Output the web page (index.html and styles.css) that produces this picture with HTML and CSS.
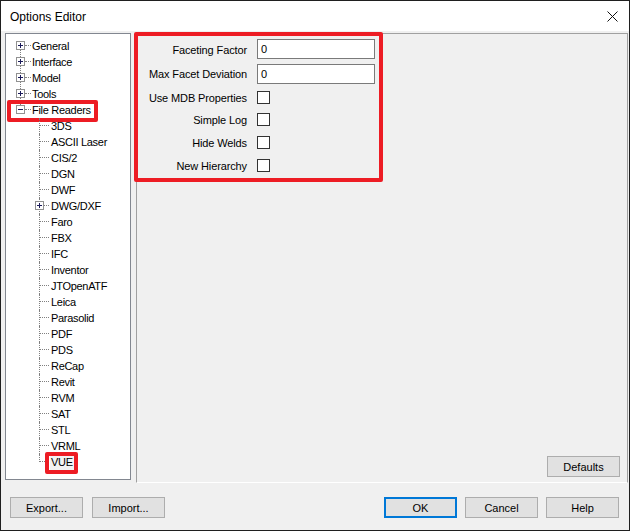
FILE: index.html
```html
<!DOCTYPE html>
<html>
<head>
<meta charset="utf-8">
<title>Options Editor</title>
<link rel="stylesheet" href="styles.css">
</head>
<body>
<div class="window">
  <div class="titlebar">
    <span class="title">Options Editor</span>
    <svg class="close" width="11" height="11" viewBox="0 0 11 11"><path d="M0.5 0.5 L10.5 10.5 M10.5 0.5 L0.5 10.5" stroke="#111" stroke-width="1" fill="none"/></svg>
  </div>
  <div class="main">
    <div class="tree">
      <div class="node top"><svg class="exp" width="9" height="9" viewBox="0 0 9 9"><rect x="0.5" y="0.5" width="8" height="8" fill="#fff" stroke="#919191"/><path d="M2 4.5H7M4.5 2V7" stroke="#1a1a5a"/></svg><span class="hl top-hl"></span><span class="label">General</span></div>
      <div class="node top"><svg class="exp" width="9" height="9" viewBox="0 0 9 9"><rect x="0.5" y="0.5" width="8" height="8" fill="#fff" stroke="#919191"/><path d="M2 4.5H7M4.5 2V7" stroke="#1a1a5a"/></svg><span class="hl top-hl"></span><span class="label">Interface</span></div>
      <div class="node top"><svg class="exp" width="9" height="9" viewBox="0 0 9 9"><rect x="0.5" y="0.5" width="8" height="8" fill="#fff" stroke="#919191"/><path d="M2 4.5H7M4.5 2V7" stroke="#1a1a5a"/></svg><span class="hl top-hl"></span><span class="label">Model</span></div>
      <div class="node top"><svg class="exp" width="9" height="9" viewBox="0 0 9 9"><rect x="0.5" y="0.5" width="8" height="8" fill="#fff" stroke="#919191"/><path d="M2 4.5H7M4.5 2V7" stroke="#1a1a5a"/></svg><span class="hl top-hl"></span><span class="label">Tools</span></div>
      <div class="node top last"><svg class="exp" width="9" height="9" viewBox="0 0 9 9"><rect x="0.5" y="0.5" width="8" height="8" fill="#fff" stroke="#919191"/><path d="M2 4.5H7" stroke="#1a1a5a"/></svg><span class="hl top-hl"></span><span class="label">File Readers</span><span class="annot annot-readers"></span></div>
      <div class="node child"><span class="hl leaf-hl"></span><span class="label">3DS</span></div>
      <div class="node child"><span class="hl leaf-hl"></span><span class="label">ASCII Laser</span></div>
      <div class="node child"><span class="hl leaf-hl"></span><span class="label">CIS/2</span></div>
      <div class="node child"><span class="hl leaf-hl"></span><span class="label">DGN</span></div>
      <div class="node child"><span class="hl leaf-hl"></span><span class="label">DWF</span></div>
      <div class="node child"><svg class="exp child-exp" width="9" height="9" viewBox="0 0 9 9"><rect x="0.5" y="0.5" width="8" height="8" fill="#fff" stroke="#919191"/><path d="M2 4.5H7M4.5 2V7" stroke="#1a1a5a"/></svg><span class="hl exp-hl"></span><span class="label">DWG/DXF</span></div>
      <div class="node child"><span class="hl leaf-hl"></span><span class="label">Faro</span></div>
      <div class="node child"><span class="hl leaf-hl"></span><span class="label">FBX</span></div>
      <div class="node child"><span class="hl leaf-hl"></span><span class="label">IFC</span></div>
      <div class="node child"><span class="hl leaf-hl"></span><span class="label">Inventor</span></div>
      <div class="node child"><span class="hl leaf-hl"></span><span class="label">JTOpenATF</span></div>
      <div class="node child"><span class="hl leaf-hl"></span><span class="label">Leica</span></div>
      <div class="node child"><span class="hl leaf-hl"></span><span class="label">Parasolid</span></div>
      <div class="node child"><span class="hl leaf-hl"></span><span class="label">PDF</span></div>
      <div class="node child"><span class="hl leaf-hl"></span><span class="label">PDS</span></div>
      <div class="node child"><span class="hl leaf-hl"></span><span class="label">ReCap</span></div>
      <div class="node child"><span class="hl leaf-hl"></span><span class="label">Revit</span></div>
      <div class="node child"><span class="hl leaf-hl"></span><span class="label">RVM</span></div>
      <div class="node child"><span class="hl leaf-hl"></span><span class="label">SAT</span></div>
      <div class="node child"><span class="hl leaf-hl"></span><span class="label">STL</span></div>
      <div class="node child"><span class="hl leaf-hl"></span><span class="label">VRML</span></div>
      <div class="node child last"><span class="hl leaf-hl"></span><span class="label selected">VUE</span><span class="annot annot-vue"></span></div>
    </div>
    <div class="panel">
      <div class="form">
        <label class="flabel">Faceting Factor</label>
        <div class="field"><span class="input">0</span></div>
        <label class="flabel">Max Facet Deviation</label>
        <div class="field"><span class="input">0</span></div>
        <label class="flabel">Use MDB Properties</label>
        <div class="field"><span class="check"></span></div>
        <label class="flabel">Simple Log</label>
        <div class="field"><span class="check"></span></div>
        <label class="flabel">Hide Welds</label>
        <div class="field"><span class="check"></span></div>
        <label class="flabel">New Hierarchy</label>
        <div class="field"><span class="check"></span></div>
      </div>
      <span class="annot annot-form"></span>
      <button class="btn defaults">Defaults</button>
    </div>
  </div>
  <div class="footer">
    <div class="group left">
      <button class="btn">Export...</button>
      <button class="btn">Import...</button>
    </div>
    <div class="group right">
      <button class="btn primary">OK</button>
      <button class="btn">Cancel</button>
      <button class="btn">Help</button>
    </div>
  </div>
</div>
</body>
</html>
```

FILE: styles.css
```css
* { box-sizing: border-box; }
html, body { margin: 0; padding: 0; }
body {
  width: 630px;
  height: 531px;
  overflow: hidden;
  font-family: "Liberation Sans", Arial, sans-serif;
  font-size: 11px;
  color: #000;
  background: #f0f0f0;
}
.window {
  width: 630px;
  height: 531px;
  border: 1px solid #1f1f1f;
  background: #f0f0f0;
  display: flex;
  flex-direction: column;
}
.titlebar {
  height: 30px;
  flex: none;
  background: #fff;
  display: flex;
  align-items: center;
  justify-content: space-between;
  padding: 1px 11px 0 9px;
}
.title { font-size: 12px; }
.close { display: block; }

.main {
  display: flex;
  align-items: flex-start;
  gap: 5px;
  padding: 2px 1px 0 4px;
  flex: none;
}

/* tree */
.tree {
  width: 126px;
  height: 447px;
  background: #fff;
  border: 1px solid #828790;
  padding-top: 4px;
  flex: none;
}
.node {
  position: relative;
  display: flex;
  align-items: flex-start;
  height: 16px;
  line-height: 16px;
  white-space: nowrap;
}
.node.top { padding-left: 10px; }
.exp { display: block; flex: none; margin-top: 3px; position: relative; z-index: 1; }
.hl { display: block; height: 0; border-top: 1px dotted #808080; margin-top: 7px; flex: none; }
.top-hl { width: 6px; }
.leaf-hl { width: 9px; margin-left: 34px; }
.child-exp { margin-left: 29px; }
.exp-hl { width: 5px; }
.label { margin-left: 1px; letter-spacing: -0.3px; }
.child .label { margin-left: 2px; }
.label.selected { background: #f3f3f3; padding: 0 1px; margin-left: 1px; }

.node.top:not(.last)::after {
  content: "";
  position: absolute;
  left: 14px;
  top: 12px;
  height: 7px;
  border-left: 1px dotted #808080;
}
.node.child::before {
  content: "";
  position: absolute;
  left: 33px;
  top: 0;
  height: 16px;
  border-left: 1px dotted #808080;
}
.node.child.last::before { height: 8px; }

/* annotation boxes */
.annot {
  position: absolute;
  border: 4px solid #ed1c24;
  border-radius: 2px;
  pointer-events: none;
}
.annot-readers { left: 1px; top: -2px; width: 91px; height: 22px; }
.annot-vue { left: 39px; top: -2px; width: 33px; height: 22px; }
.annot-form { left: -3px; top: -2px; width: 249px; height: 150px; }

/* right panel */
.panel {
  position: relative;
  width: 492px;
  height: 450px;
  flex: none;
  border-top: 1px solid #a0a0a0;
  border-left: 1px solid #a0a0a0;
  border-right: 1px solid #a0a0a0;
  border-bottom: 1px solid #ffffff;
  display: flex;
  flex-direction: column;
  padding-top: 3px;
}
.form {
  display: grid;
  grid-template-columns: 110px 118px;
  grid-template-rows: 24px 25px 22px 23px 23px 23px;
  column-gap: 10px;
  align-items: center;
}
.flabel { text-align: right; white-space: nowrap; padding-top: 1px; letter-spacing: -0.12px; }
.field { display: flex; align-items: center; height: 100%; }
.input {
  display: block;
  width: 118px;
  height: 20px;
  line-height: 18px;
  background: #fff;
  border: 1px solid #7a7a7a;
  padding: 0 3px;
}
.check {
  display: block;
  width: 13px;
  height: 13px;
  background: #fff;
  border: 1px solid #333;
}

.btn {
  width: 73px;
  height: 21px;
  margin: 0;
  padding: 0;
  background: #e1e1e1;
  border: 1px solid #adadad;
  font-family: "Liberation Sans", Arial, sans-serif;
  font-size: 11px;
  color: #000;
}
.btn.primary { border: 2px solid #0078d7; }
.defaults {
  margin-top: auto;
  align-self: flex-end;
  margin-right: 7px;
  margin-bottom: 5px;
}

.footer {
  display: flex;
  justify-content: space-between;
  padding: 14px 10px 0 9px;
}
.group { display: flex; }
.group.left { gap: 9px; }
.group.right { gap: 8px; }
```
